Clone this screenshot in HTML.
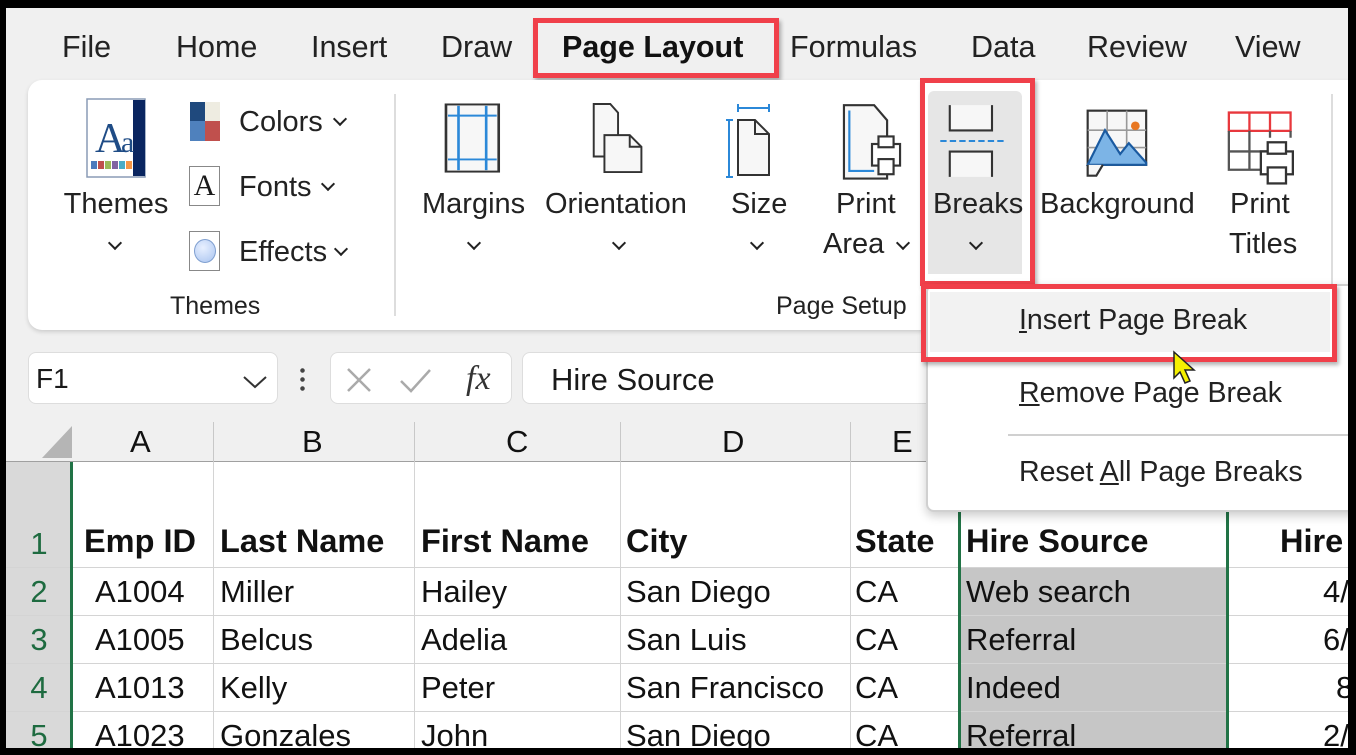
<!DOCTYPE html>
<html><head><meta charset="utf-8"><style>
*{margin:0;padding:0;box-sizing:border-box}
body{width:1356px;height:755px;background:#000;position:relative;overflow:hidden;font-family:"Liberation Sans",sans-serif;color:#1a1a1a}
.a{position:absolute;white-space:nowrap}
#app{position:absolute;left:6px;top:8px;width:1342px;height:740px;background:#f0f0f0;overflow:hidden}
.tab{position:absolute;top:22px;font-size:30.5px;color:#222}
.lbl{position:absolute;font-size:29px;color:#222;text-align:center}
.chev{position:absolute;top:0;width:14px;height:14px}
.chev::after{content:"";position:absolute;left:2px;top:0;width:8px;height:8px;border-right:2.5px solid #222;border-bottom:2.5px solid #222;transform:rotate(45deg)}
.red{position:absolute;border:5px solid #f0404a;box-shadow:2px 3px 4px rgba(0,0,0,.3)}
.cell{position:absolute;font-size:31px;color:#111;white-space:nowrap}
.b{font-weight:bold;font-size:32.5px}
.vl{position:absolute;width:1px;background:#d4d4d4}
.hlin{position:absolute;height:1px;background:#d4d4d4}
.rn{position:absolute;left:0;width:66px;text-align:center;font-size:31px;color:#1e6b40}
</style></head><body>
<div id="app">
<div class="tab" style="left:56px">File</div>
<div class="tab" style="left:170px">Home</div>
<div class="tab" style="left:305px">Insert</div>
<div class="tab" style="left:435px">Draw</div>
<div class="tab" style="left:556px;font-weight:bold;color:#111">Page Layout</div>
<div class="tab" style="left:784px">Formulas</div>
<div class="tab" style="left:965px">Data</div>
<div class="tab" style="left:1081px">Review</div>
<div class="tab" style="left:1229px">View</div>
<div class="red" style="left:527px;top:10px;width:246px;height:60px"></div>

<div class="a" style="left:22px;top:72px;width:1340px;height:250px;background:#fff;border-radius:14px;box-shadow:0 2px 4px rgba(0,0,0,.15)"></div>
<svg class="a" style="left:70px;top:90px" width="80" height="80" viewBox="0 0 60 80">
<rect x="1" y="1" width="58" height="78" fill="#fff" stroke="#8a9bb5" stroke-width="1.5"/>
<rect x="47" y="2" width="12" height="76" fill="#0a2560"/>
<text x="9" y="54" font-family="Liberation Serif,serif" font-size="42" fill="#1f4c86">A</text>
<text x="35" y="54" font-family="Liberation Serif,serif" font-size="30" fill="#1f4c86">a</text>
<rect x="5" y="63" width="6" height="8" fill="#4b7bbd"/><rect x="12" y="63" width="6" height="8" fill="#c0504d"/><rect x="19" y="63" width="6" height="8" fill="#9bbb59"/><rect x="26" y="63" width="6" height="8" fill="#8064a2"/><rect x="33" y="63" width="6" height="8" fill="#4bacc6"/><rect x="40" y="63" width="6" height="8" fill="#f79646"/>
</svg>
<div class="lbl" style="left:50px;top:180px;width:120px">Themes</div>
<div class="chev" style="left:102px;top:230px"></div>
<svg class="a" style="left:183px;top:93px" width="32" height="42"><rect x="1" y="1" width="15" height="19" fill="#1f497d"/><rect x="16" y="1" width="15" height="19" fill="#eeece1"/><rect x="1" y="20" width="15" height="20" fill="#4f81bd"/><rect x="16" y="20" width="15" height="20" fill="#c0504d"/></svg>
<div class="lbl" style="left:233px;top:98px">Colors</div><div class="chev" style="left:327px;top:106px"></div>
<div class="a" style="left:183px;top:158px;width:31px;height:40px;border:1px solid #888;background:#fff;font-family:'Liberation Serif',serif;font-size:30px;text-align:center;line-height:38px">A</div>
<div class="lbl" style="left:233px;top:163px">Fonts</div><div class="chev" style="left:315px;top:171px"></div>
<div class="a" style="left:183px;top:223px;width:31px;height:40px;border:1px solid #888;background:#fff"><div class="a" style="left:4px;top:7px;width:22px;height:24px;border-radius:50%;background:radial-gradient(circle at 40% 35%,#e8f0ff,#a9c4f0);border:1px solid #7f9fd0"></div></div>
<div class="lbl" style="left:233px;top:228px">Effects</div><div class="chev" style="left:328px;top:236px"></div>
<div class="lbl" style="left:164px;top:284px;font-size:25px">Themes</div>
<div class="a" style="left:388px;top:86px;width:2px;height:222px;background:#ddd"></div>

<svg class="a" style="left:438px;top:95px" width="58" height="72" viewBox="0 0 44 74" preserveAspectRatio="none"><rect x="1.5" y="1.5" width="40" height="69" fill="#f7f7f7" stroke="#333" stroke-width="2"/><path d="M3 13H40M3 58H40M11 3V69M32 3V69" stroke="#2b88d8" stroke-width="2"/></svg>
<div class="lbl" style="left:416px;top:180px">Margins</div><div class="chev" style="left:461px;top:230px"></div>
<svg class="a" style="left:578px;top:95px" width="72" height="72" viewBox="0 0 56 74"><path d="M1 1H18L26 10V55H1Z" fill="#f7f7f7" stroke="#333" stroke-width="2"/><path d="M12 33H38L50 45V71H12Z" fill="#f7f7f7" stroke="#333" stroke-width="2"/><path d="M38 33V45H50" fill="none" stroke="#333" stroke-width="2"/></svg>
<div class="lbl" style="left:539px;top:180px">Orientation</div><div class="chev" style="left:606px;top:230px"></div>
<svg class="a" style="left:716px;top:95px" width="58" height="76" viewBox="0 0 48 76"><path d="M11 5H42M11 1V9M42 1V9M2 17V74M-1 17H6M-1 74H6" stroke="#2b88d8" stroke-width="2"/><path d="M11 17H28L42 31V72H11Z" fill="#f7f7f7" stroke="#333" stroke-width="2"/><path d="M28 17V31H42" fill="none" stroke="#333" stroke-width="2"/></svg>
<div class="lbl" style="left:725px;top:180px">Size</div><div class="chev" style="left:744px;top:230px"></div>
<svg class="a" style="left:830px;top:95px" width="72" height="82" viewBox="0 0 56 76"><path d="M2 2H30L42 16V70H2Z" fill="#f7f7f7" stroke="#333" stroke-width="2"/><path d="M7 7V63H30" fill="none" stroke="#2b88d8" stroke-width="2"/><rect x="28" y="38" width="26" height="20" fill="#fff" stroke="#333" stroke-width="2"/><rect x="34" y="31" width="14" height="10" fill="#fff" stroke="#333" stroke-width="2"/><rect x="34" y="52" width="14" height="14" fill="#fff" stroke="#333" stroke-width="2"/></svg>
<div class="lbl" style="left:830px;top:180px">Print</div>
<div class="lbl" style="left:817px;top:220px">Area</div><div class="chev" style="left:890px;top:230px"></div>
<div class="a" style="left:922px;top:83px;width:94px;height:183px;background:#e6e6e6;border-radius:6px 6px 0 0"></div>
<svg class="a" style="left:928px;top:95px" width="78" height="76" viewBox="0 0 64 72"><rect x="10" y="2" width="40" height="24" fill="#f7f7f7"/><path d="M10 2V26H50V2" fill="none" stroke="#333" stroke-width="2"/><path d="M1 36H61" stroke="#2b88d8" stroke-width="2" stroke-dasharray="6 3"/><rect x="10" y="46" width="40" height="24" fill="#f7f7f7"/><path d="M10 70V46H50V70" fill="none" stroke="#333" stroke-width="2"/></svg>
<div class="lbl" style="left:927px;top:180px">Breaks</div><div class="chev" style="left:963px;top:230px"></div>
<div class="red" style="left:914px;top:70px;width:115px;height:208px"></div>
<svg class="a" style="left:1075px;top:94px" width="74" height="78" viewBox="0 0 60 72"><rect x="2" y="8" width="54" height="50" fill="#f7f7f7" stroke="#333" stroke-width="2"/><path d="M2 26H56M2 42H56M20 8V58M38 8V58" stroke="#999" stroke-width="1.5"/><path d="M2 58L18 26L32 48L40 38L56 56V58H2Z" fill="#7cb4e6" stroke="#1a5aa0" stroke-width="2"/><circle cx="46" cy="22" r="4" fill="#e87722"/><path d="M2 58V68H10L16 58" fill="#f7f7f7" stroke="#333" stroke-width="2"/></svg>
<div class="lbl" style="left:1034px;top:180px">Background</div>
<svg class="a" style="left:1218px;top:100px" width="76" height="80" viewBox="0 0 62 70"><path d="M2 4H56V20H2Z" fill="#fff" stroke="#e8383d" stroke-width="2"/><path d="M20 4V20M38 4V20" stroke="#e8383d" stroke-width="2"/><path d="M2 20V54H36M2 38H36M20 20V54M38 20V26M56 20V26" fill="none" stroke="#555" stroke-width="2"/><rect x="30" y="38" width="28" height="20" fill="#fff" stroke="#333" stroke-width="2"/><rect x="36" y="30" width="16" height="10" fill="#fff" stroke="#333" stroke-width="2"/><rect x="36" y="52" width="16" height="14" fill="#fff" stroke="#333" stroke-width="2"/></svg>
<div class="lbl" style="left:1224px;top:180px">Print</div>
<div class="lbl" style="left:1223px;top:220px">Titles</div>
<div class="a" style="left:1325px;top:86px;width:2px;height:190px;background:#ddd"></div>
<div class="lbl" style="left:770px;top:284px;font-size:25px">Page Setup</div>

<div class="a" style="left:22px;top:344px;width:250px;height:52px;background:#fff;border:1px solid #ddd;border-radius:8px"></div>
<div class="a" style="left:30px;top:355px;font-size:28px">F1</div>
<svg class="a" style="left:236px;top:366px" width="26" height="16"><path d="M2 3L13 13L24 3" fill="none" stroke="#333" stroke-width="2"/></svg>
<div class="a" style="left:294px;top:358px;width:5px;height:26px;background:radial-gradient(circle,#444 2px,transparent 2.5px) 0 0/5px 9px"></div>
<div class="a" style="left:324px;top:344px;width:182px;height:52px;background:#fff;border:1px solid #ddd;border-radius:8px"></div>
<svg class="a" style="left:338px;top:358px" width="120" height="28"><path d="M4 3L26 25M26 3L4 25" stroke="#aaa" stroke-width="2.5"/><path d="M57 15L67 25L86 4" fill="none" stroke="#aaa" stroke-width="2.5"/></svg>
<div class="a" style="left:460px;top:352px;font-family:'Liberation Serif',serif;font-style:italic;font-size:34px;color:#333">fx</div>
<div class="a" style="left:516px;top:344px;width:900px;height:52px;background:#fff;border:1px solid #ddd;border-radius:8px"></div>
<div class="a" style="left:545px;top:354px;font-size:31px">Hire Source</div>

<div class="a" style="left:0;top:414px;width:1342px;height:40px;background:#f0f0f0"></div>
<svg class="a" style="left:34px;top:416px" width="34" height="36"><path d="M32 2V34H2Z" fill="#b5b5b5"/></svg>
<div class="a" style="left:0;top:454px;width:66px;height:290px;background:#d9d9d9"></div>
<div class="a" style="left:66px;top:454px;width:1300px;height:290px;background:#fff"></div>
<div class="a" style="left:0;top:453px;width:1342px;height:1px;background:#a0a0a0"></div>
<div class="cell" style="left:124px;top:416px">A</div>
<div class="cell" style="left:296px;top:416px">B</div>
<div class="cell" style="left:500px;top:416px">C</div>
<div class="cell" style="left:716px;top:416px">D</div>
<div class="cell" style="left:886px;top:416px">E</div>
<div class="vl" style="left:207px;top:414px;height:40px;background:#c8c8c8"></div>
<div class="vl" style="left:408px;top:414px;height:40px;background:#c8c8c8"></div>
<div class="vl" style="left:614px;top:414px;height:40px;background:#c8c8c8"></div>
<div class="vl" style="left:844px;top:414px;height:40px;background:#c8c8c8"></div>

<div class="a" style="left:954px;top:560px;width:268px;height:190px;background:#c6c6c6"></div>
<div class="vl" style="left:207px;top:454px;height:300px"></div>
<div class="vl" style="left:408px;top:454px;height:300px"></div>
<div class="vl" style="left:614px;top:454px;height:300px"></div>
<div class="vl" style="left:844px;top:454px;height:300px"></div>
<div class="hlin" style="left:0;top:559px;width:1342px"></div>
<div class="hlin" style="left:0;top:607px;width:1342px"></div>
<div class="hlin" style="left:0;top:655px;width:1342px"></div>
<div class="hlin" style="left:0;top:703px;width:1342px"></div>
<div class="a" style="left:64px;top:454px;width:3px;height:300px;background:#217346"></div>
<div class="a" style="left:952px;top:504px;width:3px;height:250px;background:#217346"></div>
<div class="a" style="left:1220px;top:504px;width:3px;height:250px;background:#217346"></div>

<div class="rn" style="top:518px">1</div><div class="rn" style="top:566px">2</div><div class="rn" style="top:614px">3</div><div class="rn" style="top:662px">4</div><div class="rn" style="top:710px">5</div>
<div class="cell b" style="left:78px;top:515px">Emp ID</div>
<div class="cell b" style="left:214px;top:515px">Last Name</div>
<div class="cell b" style="left:415px;top:515px">First Name</div>
<div class="cell b" style="left:620px;top:515px">City</div>
<div class="cell b" style="left:849px;top:515px">State</div>
<div class="cell b" style="left:960px;top:515px">Hire Source</div>
<div class="cell b" style="left:1274px;top:515px">Hire</div>

<div class="cell" style="left:89px;top:566px">A1004</div><div class="cell" style="left:214px;top:566px">Miller</div><div class="cell" style="left:415px;top:566px">Hailey</div><div class="cell" style="left:620px;top:566px">San Diego</div><div class="cell" style="left:849px;top:566px">CA</div><div class="cell" style="left:960px;top:566px">Web search</div><div class="cell" style="left:1317px;top:566px">4/</div>
<div class="cell" style="left:89px;top:614px">A1005</div><div class="cell" style="left:214px;top:614px">Belcus</div><div class="cell" style="left:415px;top:614px">Adelia</div><div class="cell" style="left:620px;top:614px">San Luis</div><div class="cell" style="left:849px;top:614px">CA</div><div class="cell" style="left:960px;top:614px">Referral</div><div class="cell" style="left:1317px;top:614px">6/</div>
<div class="cell" style="left:89px;top:662px">A1013</div><div class="cell" style="left:214px;top:662px">Kelly</div><div class="cell" style="left:415px;top:662px">Peter</div><div class="cell" style="left:620px;top:662px">San Francisco</div><div class="cell" style="left:849px;top:662px">CA</div><div class="cell" style="left:960px;top:662px">Indeed</div><div class="cell" style="left:1330px;top:662px">8</div>
<div class="cell" style="left:89px;top:710px">A1023</div><div class="cell" style="left:214px;top:710px">Gonzales</div><div class="cell" style="left:415px;top:710px">John</div><div class="cell" style="left:620px;top:710px">San Diego</div><div class="cell" style="left:849px;top:710px">CA</div><div class="cell" style="left:960px;top:710px">Referral</div><div class="cell" style="left:1317px;top:710px">2/</div>

<div class="a" style="left:920px;top:276px;width:440px;height:228px;background:#fff;border:2px solid #d0d0d0;border-radius:8px;box-shadow:0 4px 10px rgba(0,0,0,.2)"></div>
<div class="a" style="left:924px;top:284px;width:400px;height:60px;background:#f2f2f2"></div>
<div class="a" style="left:1013px;top:296px;font-size:28.5px;color:#222"><u>I</u>nsert Page Break</div>
<div class="a" style="left:1013px;top:369px;font-size:28.5px;color:#222"><u>R</u>emove Page Break</div>
<div class="a" style="left:1002px;top:426px;width:350px;height:2px;background:#d0d0d0"></div>
<div class="a" style="left:1013px;top:448px;font-size:28.5px;color:#222">Reset <u>A</u>ll Page Breaks</div>
<div class="red" style="left:915px;top:276px;width:416px;height:78px"></div>
<svg class="a" style="left:1166px;top:342px" width="26" height="36"><path d="M2 2L2 28L8 22L13 33L18 31L13 20L22 20Z" fill="#f5f000" stroke="#222" stroke-width="1.5"/></svg>
</div>
</body></html>
